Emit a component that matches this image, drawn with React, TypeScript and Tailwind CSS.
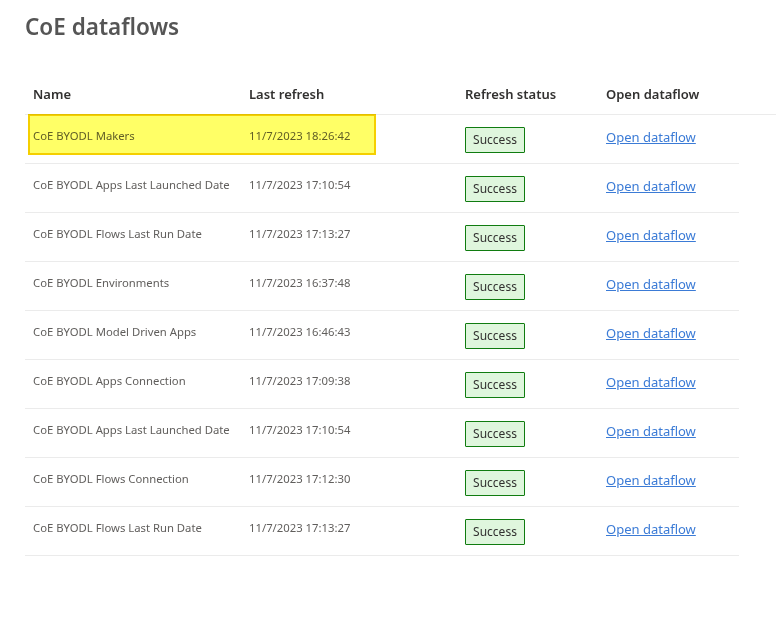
import React from "react";

const rows = [
  ["CoE BYODL Makers", "11/7/2023 18:26:42"],
  ["CoE BYODL Apps Last Launched Date", "11/7/2023 17:10:54"],
  ["CoE BYODL Flows Last Run Date", "11/7/2023 17:13:27"],
  ["CoE BYODL Environments", "11/7/2023 16:37:48"],
  ["CoE BYODL Model Driven Apps", "11/7/2023 16:46:43"],
  ["CoE BYODL Apps Connection", "11/7/2023 17:09:38"],
  ["CoE BYODL Apps Last Launched Date", "11/7/2023 17:10:54"],
  ["CoE BYODL Flows Connection", "11/7/2023 17:12:30"],
  ["CoE BYODL Flows Last Run Date", "11/7/2023 17:13:27"],
];

export default function App() {
  return (
    <div
      className="relative w-[776px] h-[622px] bg-white pl-[25px]"
      style={{ fontFamily: '"Segoe UI", "Noto Sans", "Open Sans", sans-serif' }}
    >
      <h1 className="pt-[11px] h-[76px] text-[22.5px] leading-[32px] font-semibold text-[#555555]">
        CoE dataflows
      </h1>
      <div className="grid grid-cols-[216px_216px_141px_1fr] h-[39px] items-center border-b border-[#ebebeb] text-[13px] font-semibold text-[#323130]">
        <div className="pl-[8px]">Name</div>
        <div className="pl-[8px]">Last refresh</div>
        <div className="pl-[8px]">Refresh status</div>
        <div className="pl-[8px]">Open dataflow</div>
      </div>
      <div className="w-[714px]">
        {rows.map(([name, date], i) => (
          <div
            key={i}
            className="grid grid-cols-[216px_216px_141px_141px] h-[49px] items-center border-b border-[#ebebeb] text-[11.3px] text-[#605e5c]"
          >
            <div className="pl-[8px] whitespace-nowrap -mt-[6px]">{name}</div>
            <div className="pl-[8px] whitespace-nowrap -mt-[6px]">{date}</div>
            <div className="pl-[8px]">
              <span className="inline-flex items-center justify-center w-[60px] h-[26px] mt-[1px] border border-[#107c10] bg-[#dff6dd] rounded-[1px] text-[12px] text-[#323130]">
                Success
              </span>
            </div>
            <div className="pl-[8px] -mt-[2px]">
              <a className="text-[13px] text-[#3b7bd6] underline" href="#">
                Open dataflow
              </a>
            </div>
          </div>
        ))}
      </div>
      <div className="absolute left-[28px] top-[114px] w-[348px] h-[41px] border-2 border-[#f5cf00] bg-[#ffff66] pointer-events-none mix-blend-multiply" />
    </div>
  );
}
